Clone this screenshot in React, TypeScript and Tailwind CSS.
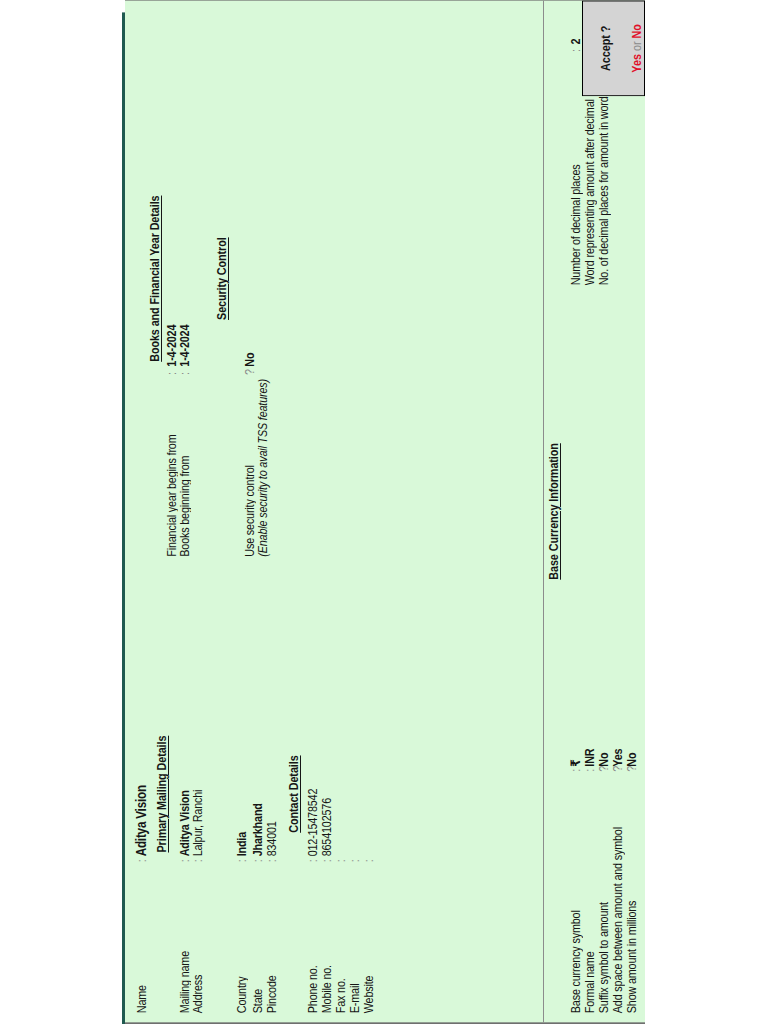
import React from "react";

type RowProps = {
  label: React.ReactNode;
  value?: React.ReactNode;
  q?: boolean;
  bold?: boolean;
  lw: string;
  cw: string;
  h?: string;
  vcls?: string;
};

function Row({ label, value, q, bold, lw, cw, h, vcls }: RowProps) {
  return (
    <div className={`flex whitespace-nowrap ${h ?? "h-[13px] leading-[13px]"}`}>
      <div className={`${lw} shrink-0 overflow-hidden`}>{label}</div>
      <div className={`${cw} shrink-0 text-[#8a8a8a]`}>{q ? "?" : ":"}</div>
      <div className={`${bold ? "font-bold" : ""} ${vcls ?? ""}`}>{value}</div>
    </div>
  );
}

function Header({ children, cls }: { children: React.ReactNode; cls: string }) {
  return (
    <div className={`h-[13px] leading-[13px] text-center font-bold text-[13px] tracking-[-0.1px] whitespace-nowrap ${cls}`}>
      <span className="underline underline-offset-2 decoration-1">{children}</span>
    </div>
  );
}

const L = "w-[193px] pl-[11px]";
const C = "w-[7px]";
const RL = "w-[219px]";
const RC = "w-[10px]";
const H14 = "h-[14px] leading-[14px]";
const BL = "w-[302px] pl-[11px]";
const BC = "w-[6px]";
const RBL = "w-[281px]";
const RBC = "w-[9px]";

export default function App() {
  return (
    <div className="w-[768px] h-[1024px] overflow-hidden bg-white">
      <div className="w-[1234px] h-[768px] origin-top-left [transform:translateY(1024px)_rotate(-90deg)_scaleX(0.83)] flex flex-col font-['Liberation_Sans',Arial,'DejaVu_Sans',sans-serif] text-[13px] tracking-[-0.2px] text-[#161616]">
        <div className="h-[122px] shrink-0 bg-white" />
        <div className="h-[3px] shrink-0 flex">
          <div className="flex-1 bg-[#1f5a50]" />
          <div className="w-[15px] bg-white" />
        </div>
        <div className="relative h-[520px] shrink-0 bg-[#d9f9d9] border-l-2 border-r border-[#6f6f6f] flex flex-col">
          {/* Upper section */}
          <div className="h-[419px] shrink-0 border-b border-[#8c8c8c] flex">
            {/* Left column */}
            <div className="w-[561px] shrink-0">
              <div className="mt-[10px] flex whitespace-nowrap h-[13px] leading-[13px]">
                <div className={`${L} shrink-0`}>Name</div>
                <div className={`${C} shrink-0 text-[#8a8a8a]`}>:</div>
                <div className="font-bold text-[14px]">Aditya Vision</div>
              </div>
              <Header cls="mt-[7px] w-[550px]">Primary Mailing Details</Header>
              <div className="mt-[10px]">
                <Row lw={L} cw={C} label="Mailing name" value="Aditya Vision" bold />
                <Row lw={L} cw={C} label="Address" value="Lalpur, Ranchi" />
              </div>
              <div className="mt-[31px]">
                <Row lw={L} cw={C} label="Country" value="India" bold />
              </div>
              <div className="mt-[3px]">
                <Row lw={L} cw={C} label="State" value="Jharkhand" bold />
              </div>
              <div className="mt-[1px]">
                <Row lw={L} cw={C} label="Pincode" value="834001" />
              </div>
              <Header cls="mt-[9px] w-[550px]">Contact Details</Header>
              <div className="mt-[6px]">
                <Row lw={L} cw={C} h={H14} label="Phone no." value="012-15478542" />
                <Row lw={L} cw={C} h={H14} label="Mobile no." value="8654102576" />
                <Row lw={L} cw={C} h={H14} label="Fax no." />
                <Row lw={L} cw={C} h={H14} label="E-mail" />
                <Row lw={L} cw={C} h={H14} label="Website" />
              </div>
            </div>
            {/* Right column */}
            <div className="flex-1">
              <Header cls="mt-[23px]">Books and Financial Year Details</Header>
              <div className="mt-[4px]">
                <Row lw={RL} cw={RC} label="Financial year begins from" value="1-4-2024" bold />
                <Row lw={RL} cw={RC} label="Books beginning from" value="1-4-2024" bold />
              </div>
              <Header cls="mt-[24px]">Security Control</Header>
              <div className="mt-[15px]">
                <Row lw={RL} cw={RC} label="Use security control" value="No" q bold />
                <div className="h-[13px] leading-[13px] italic whitespace-nowrap">
                  (Enable security to avail TSS features)
                </div>
              </div>
            </div>
          </div>
          {/* Lower section */}
          <div className="h-[101px] shrink-0">
            <Header cls="mt-[3px]">Base Currency Information</Header>
            <div className="mt-[9px] flex">
              <div className="w-[888px] shrink-0">
                <Row lw={BL} cw={BC} h={H14} label="Base currency symbol" value="₹" bold />
                <Row lw={BL} cw={BC} h={H14} label="Formal name" value="INR" bold />
                <Row lw={BL} cw={BC} h={H14} label="Suffix symbol to amount" value="No" q bold />
                <Row lw={BL} cw={BC} h={H14} label="Add space between amount and symbol" value="Yes" q bold />
                <Row lw={BL} cw={BC} h={H14} label="Show amount in millions" value="No" q bold />
              </div>
              <div className="flex-1">
                <Row lw={RBL} cw={RBC} h={H14} label="Number of decimal places" value="2" bold />
                <Row lw={RBL} cw={RBC} h={H14} label="Word representing amount after decimal" />
                <Row lw={RBL} cw={RBC} h={H14} label="No. of decimal places for amount in words" />
              </div>
            </div>
          </div>
          {/* Accept overlay */}
          <div className="absolute right-0 bottom-0 w-[115px] h-[63px] border border-black bg-[#d4d4d4] flex flex-col items-center pt-[16px] tracking-normal">
            <div className="h-[13px] leading-[13px] font-bold text-[13px] whitespace-nowrap">Accept ?</div>
            <div className="mt-[18px] h-[13px] leading-[13px] text-[13px] whitespace-nowrap">
              <span className="font-bold text-[#e0102a]">Yes</span>
              <span className="text-[#8a8a8a]"> or </span>
              <span className="font-bold text-[#e0102a]">No</span>
            </div>
          </div>
        </div>
        <div className="flex-1 bg-white" />
      </div>
    </div>
  );
}
